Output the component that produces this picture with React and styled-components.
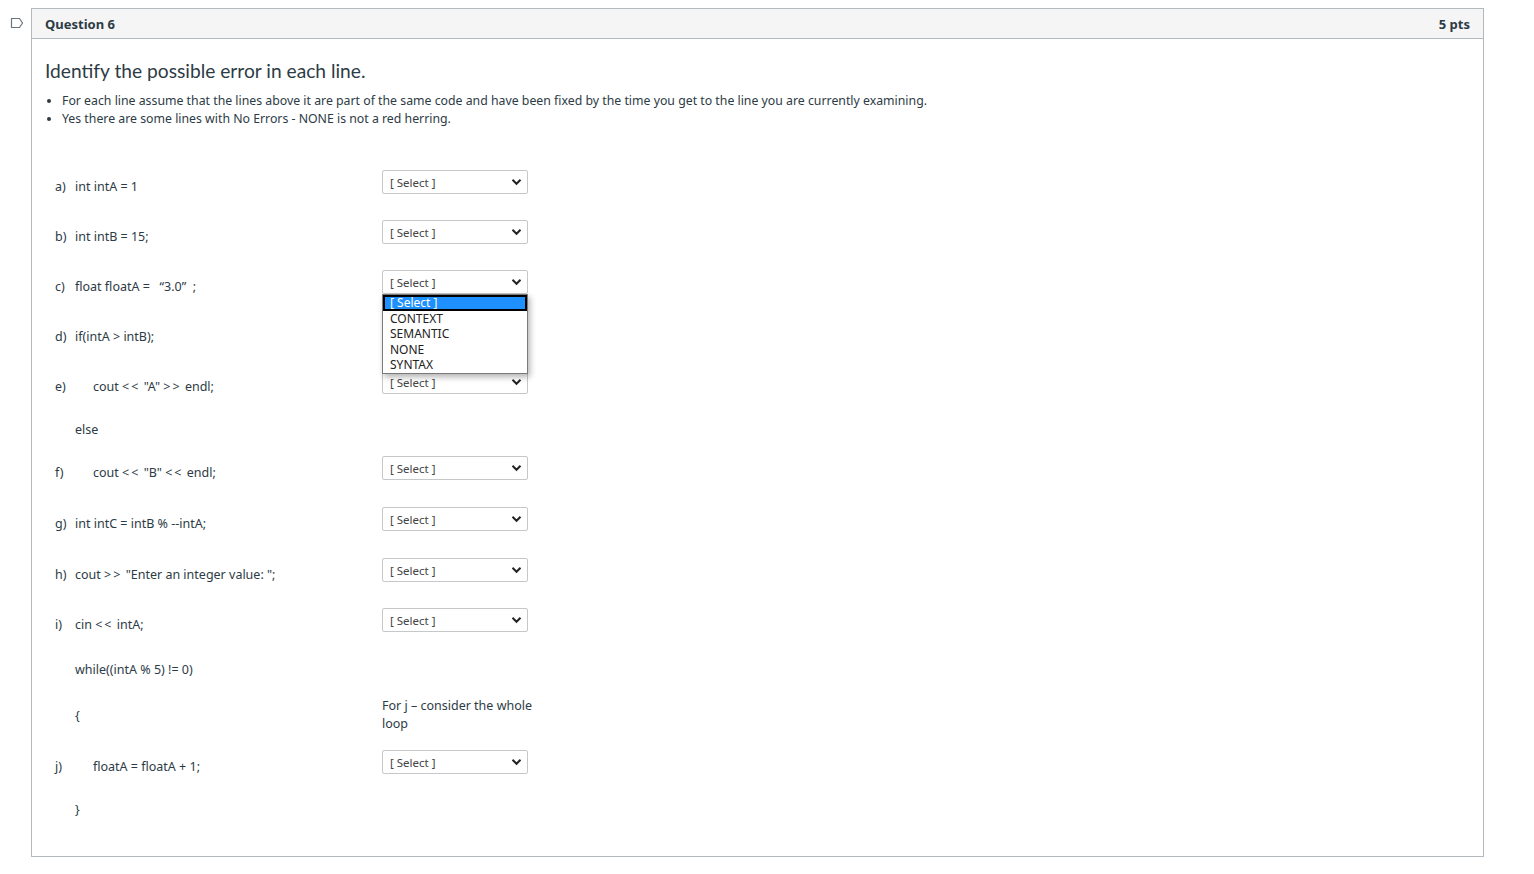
import React from "react";
import styled, { createGlobalStyle } from "styled-components";

const Global = createGlobalStyle`
  html, body { margin: 0; padding: 0; background: #fff; }
  body { font-family: "Noto Sans", "Open Sans", sans-serif; color: #2d3b45; }
`;

const Page = styled.div`
  display: flex;
  align-items: flex-start;
  padding: 8px 50px 0 10px;
`;

const FlagCol = styled.div`
  width: 21px;
  padding-top: 9px;
  display: flex;
`;

const Card = styled.div`
  flex: 1;
  border: 1px solid #b4b9bd;
  display: flex;
  flex-direction: column;
  position: relative;
`;

const Header = styled.div`
  height: 29px;
  background: #f5f5f5;
  border-bottom: 1px solid #b4b9bd;
  display: flex;
  align-items: center;
  justify-content: space-between;
  padding: 0 13px 0 13px;
  font-size: 13px;
  font-weight: 700;
  color: #2d3b45;
`;

const Body = styled.div`
  padding: 18px 14px 33px 13px;
  display: flex;
  flex-direction: column;
`;

const Title = styled.h2`
  margin: 0 0 7px 0;
  font-family: "Lato", "Noto Sans", sans-serif;
  font-size: 19.2px;
  font-weight: 400;
  line-height: 28px;
  color: #2d3b45;
`;

const Bullets = styled.ul`
  margin: 0 0 29px 0;
  padding-left: 17px;
  font-size: 12.3px;
  line-height: 18px;
`;

const Row = styled.div`
  height: ${(p) => p.$h}px;
  display: grid;
  grid-template-columns: 337px 160px;
  align-items: center;
`;

const Code = styled.div`
  display: flex;
  padding-top: 8px;
  font-size: 12.5px;
  padding-left: 10px;
`;

const Letter = styled.span`
  width: 20px;
`;

const Stmt = styled.span`
  padding-left: ${(p) => (p.$indent ? 18 : 0)}px;
  white-space: pre;
`;

const Op = styled.span`
  letter-spacing: 2px;
`;

const SelectBox = styled.div`
  position: relative;
  width: 146px;
  height: 24px;
  box-sizing: border-box;
  border: 1px solid #c4c8cb;
  border-radius: 2px;
  display: flex;
  align-items: center;
  justify-content: space-between;
  padding: 0 5px 0 7px;
  font-size: 11.5px;
  color: #444;
  background: #fff;
`;

const Note = styled.div`
  font-size: 12.5px;
  line-height: 18px;
  width: 150px;
  padding-top: 8px;
`;

const Menu = styled.ul`
  position: absolute;
  left: -1px;
  top: 23px;
  width: 146px;
  margin: 0;
  padding: 0;
  list-style: none;
  background: #fff;
  border: 1px solid #7a7a7a;
  box-shadow: 2px 3px 6px rgba(0, 0, 0, 0.3);
  z-index: 2;
  box-sizing: border-box;
`;

const Option = styled.li`
  height: 15.5px;
  line-height: 15px;
  font-size: 12px;
  padding-left: 7px;
  color: ${(p) => (p.$active ? "#fff" : "#222")};
  background: ${(p) => (p.$active ? "#1e90ff" : "transparent")};
  outline: ${(p) => (p.$active ? "2px solid #000" : "none")};
  outline-offset: -2px;
`;

const Chevron = () => (
  <svg width="11" height="8" viewBox="0 0 11 8">
    <path d="M1.5 1.8 L5.5 5.8 L9.5 1.8" fill="none" stroke="#222" strokeWidth="2" />
  </svg>
);

const Flag = () => (
  <svg width="14" height="12" viewBox="0 0 14 12">
    <path d="M1.5 1.5 H9.5 L12.5 6 L9.5 10.5 H1.5 Z" fill="none" stroke="#6b7780" strokeWidth="1.2" />
  </svg>
);

const Select = ({ open }) => (
  <SelectBox>
    <span>[ Select ]</span>
    <Chevron />
    {open && (
      <Menu>
        <Option $active>[ Select ]</Option>
        <Option>CONTEXT</Option>
        <Option>SEMANTIC</Option>
        <Option>NONE</Option>
        <Option>SYNTAX</Option>
      </Menu>
    )}
  </SelectBox>
);

const renderCode = (t) =>
  t.split(/(<<|>>)/).map((part, i) =>
    part === "<<" || part === ">>" ? <Op key={i}>{part}</Op> : part
  );

const rows = [
  { l: "a)", t: "int intA = 1", h: 50, sel: true },
  { l: "b)", t: "int intB = 15;", h: 50, sel: true },
  { l: "c)", t: "float floatA =   \u201c3.0\u201d  ;", h: 50, sel: true, open: true },
  { l: "d)", t: "if(intA > intB);", h: 50, sel: true },
  { l: "e)", t: "cout << \"A\" >> endl;", h: 50, sel: true, indent: true },
  { l: "", t: "else", h: 36 },
  { l: "f)", t: "cout << \"B\" << endl;", h: 50, sel: true, indent: true },
  { l: "g)", t: "int intC = intB % --intA;", h: 52, sel: true },
  { l: "h)", t: "cout >> \"Enter an integer value: \";", h: 50, sel: true },
  { l: "i)", t: "cin << intA;", h: 50, sel: true },
  { l: "", t: "while((intA % 5) != 0)", h: 40 },
  { l: "", t: "{", h: 52, note: true },
  { l: "j)", t: "floatA = floatA + 1;", h: 50, sel: true, indent: true },
  { l: "", t: "}", h: 36 },
];

export default function App() {
  return (
    <>
      <Global />
      <Page>
        <FlagCol>
          <Flag />
        </FlagCol>
        <Card>
          <Header>
            <span>Question 6</span>
            <span>5 pts</span>
          </Header>
          <Body>
            <Title>Identify the possible error in each line.</Title>
            <Bullets>
              <li>For each line assume that the lines above it are part of the same code and have been fixed by the time you get to the line you are currently examining.</li>
              <li>Yes there are some lines with No Errors - NONE is not a red herring.</li>
            </Bullets>
            {rows.map((r, i) => (
              <Row key={i} $h={r.h}>
                <Code>
                  <Letter>{r.l}</Letter>
                  <Stmt $indent={r.indent}>{renderCode(r.t)}</Stmt>
                </Code>
                <div>
                  {r.sel && <Select open={r.open} />}
                  {r.note && <Note>For j – consider the whole loop</Note>}
                </div>
              </Row>
            ))}
          </Body>
        </Card>
      </Page>
    </>
  );
}
